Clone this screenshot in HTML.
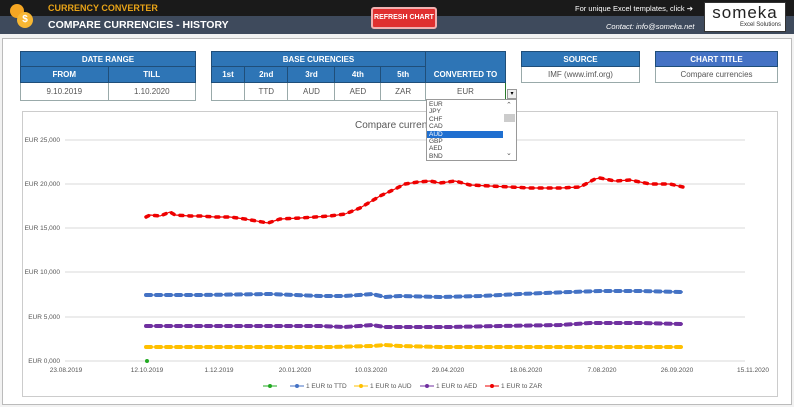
<!DOCTYPE html>
<html><head><meta charset="utf-8"><style>
*{margin:0;padding:0;box-sizing:border-box}
body{width:794px;height:407px;overflow:hidden;background:#f2f2f2;font-family:"Liberation Sans",sans-serif;position:relative}
.abs{position:absolute;white-space:nowrap}
.hdr{background:#1a1a1a;left:0;top:0;width:794px;height:16px}
.hdr2{background:#3e4a5c;left:0;top:16px;width:794px;height:18px}
.main{left:2px;top:38px;width:790px;height:367px;background:#fff;border:1px solid #bbb}
table{border-collapse:collapse;position:absolute;font-size:8px;text-align:center}
td{border:1px solid #9aa;height:16px}
.bh{background:#2e75b6;color:#fff;font-weight:bold;border-color:#1f4e79}
</style></head><body>
<div class="abs hdr"></div><div class="abs hdr2"></div>
<div class="abs" style="left:10px;top:4px;width:14px;height:14px;border-radius:50%;background:#f5a623"></div>
<div class="abs" style="left:17px;top:12px;width:16px;height:16px;border-radius:50%;background:#f7b733;color:#fff;font-size:10px;font-weight:bold;text-align:center;line-height:16px">$</div>
<div class="abs" style="left:48px;top:3px;color:#e8a317;font-size:9px;font-weight:bold">CURRENCY CONVERTER</div>
<div class="abs" style="left:48px;top:19px;color:#fff;font-size:10.5px;font-weight:bold">COMPARE CURRENCIES - HISTORY</div>
<div class="abs" style="left:371px;top:7px;width:66px;height:22px;background:#e03030;border:2px solid #f0b0b0;border-radius:3px;color:#fff;font-size:7px;font-weight:bold;text-align:center;line-height:18px">REFRESH CHART</div>
<div class="abs" style="left:575px;top:4px;color:#fff;font-size:7.5px">For unique Excel templates, click ➔</div>
<div class="abs" style="left:606px;top:22px;color:#fff;font-size:7.5px;font-style:italic">Contact: info@someka.net</div>
<div class="abs" style="left:704px;top:2px;width:82px;height:30px;background:#fff;border:1px solid #333;text-align:center">
<div style="font-size:17px;line-height:19px;letter-spacing:1px;color:#222">someka</div><div style="font-size:6px;color:#333;text-align:right;padding-right:4px">Excel Solutions</div></div>
<div class="abs main"></div>
<table style="left:20px;top:51px;width:176px"><tr><td colspan="2" class="bh" style="height:15px">DATE RANGE</td></tr><tr><td class="bh">FROM</td><td class="bh">TILL</td></tr><tr><td style="height:18px;color:#555">9.10.2019</td><td style="color:#555">1.10.2020</td></tr></table>
<table style="left:211px;top:51px;width:295px"><tr><td colspan="5" class="bh" style="height:15px">BASE CURENCIES</td><td rowspan="2" class="bh" style="width:80px;padding-top:14px">CONVERTED TO</td></tr><tr><td class="bh">1st</td><td class="bh">2nd</td><td class="bh">3rd</td><td class="bh">4th</td><td class="bh">5th</td></tr><tr><td style="height:18px"></td><td style="color:#555">TTD</td><td style="color:#555">AUD</td><td style="color:#555">AED</td><td style="color:#555">ZAR</td><td style="color:#555;border-color:#2a7a2a">EUR</td></tr></table>
<table style="left:521px;top:51px;width:119px"><tr><td class="bh" style="height:15px">SOURCE</td></tr><tr><td style="color:#555">IMF (www.imf.org)</td></tr></table>
<table style="left:655px;top:51px;width:123px"><tr><td class="bh" style="height:15px;background:#4472c4">CHART TITLE</td></tr><tr><td style="color:#555">Compare currencies</td></tr></table>
<div class="abs" style="left:22px;top:111px;width:756px;height:286px;border:1px solid #ccc;background:#fff"></div>
<svg class="abs" style="left:0;top:0" width="794" height="407">
<g stroke="#d9d9d9" stroke-width="1"><line x1="65" y1="140" x2="745" y2="140"/><line x1="65" y1="184" x2="745" y2="184"/><line x1="65" y1="228" x2="745" y2="228"/><line x1="65" y1="272" x2="745" y2="272"/><line x1="65" y1="317" x2="745" y2="317"/><line x1="65" y1="361" x2="745" y2="361"/></g>
<g font-family="Liberation Sans" font-size="6.5" fill="#555" text-anchor="end"><text x="60" y="142">EUR 25,000</text><text x="60" y="186">EUR 20,000</text><text x="60" y="230">EUR 15,000</text><text x="60" y="274">EUR 10,000</text><text x="60" y="319">EUR 5,000</text><text x="60" y="363">EUR 0,000</text></g>
<g font-family="Liberation Sans" font-size="6.5" fill="#555" text-anchor="middle"><text x="66" y="372">23.08.2019</text><text x="147" y="372">12.10.2019</text><text x="219" y="372">1.12.2019</text><text x="295" y="372">20.01.2020</text><text x="371" y="372">10.03.2020</text><text x="448" y="372">29.04.2020</text><text x="526" y="372">18.06.2020</text><text x="602" y="372">7.08.2020</text><text x="677" y="372">26.09.2020</text><text x="753" y="372">15.11.2020</text></g>
<text x="355" y="128" font-family="Liberation Sans" font-size="10" fill="#595959">Compare currencies</text>
<polyline fill="none" stroke="#e00" stroke-width="1.2" stroke-linejoin="round" points="146,217 150,215 160,216 170,212 175,215 190,216 200,216 215,217 230,217 245,219 268,223 280,219 300,218 315,217 330,216 345,214 360,208 370,202 380,196 395,189 405,184 418,182 430,181 440,183 455,181 470,185 490,186 510,187 530,188 560,188 580,187 595,179 600,178 615,181 630,180 650,184 670,184 683,187"/>
<polyline fill="none" stroke="#e00" stroke-width="3.5" stroke-dasharray="3 6" stroke-linecap="round" points="146,217 150,215 160,216 170,212 175,215 190,216 200,216 215,217 230,217 245,219 268,223 280,219 300,218 315,217 330,216 345,214 360,208 370,202 380,196 395,189 405,184 418,182 430,181 440,183 455,181 470,185 490,186 510,187 530,188 560,188 580,187 595,179 600,178 615,181 630,180 650,184 670,184 683,187"/>
<g fill="none" stroke-width="1.2"><polyline stroke="#4472c4" points="146,295 200,295 270,294 320,296 345,296 372,294 385,297 400,296 440,297 480,296 520,294 570,292 600,291 640,291 683,292"/>
<polyline stroke="#7030a0" points="146,326 250,326 320,326 345,327 372,325 385,327 450,327 500,326 560,325 590,323 640,323 683,324"/>
<polyline stroke="#ffc000" points="146,347 250,347 330,347 372,346 385,345 400,346 440,347 500,347 600,347 683,347"/></g>
<g fill="none" stroke-width="4" stroke-dasharray="5 5" stroke-linecap="round"><polyline stroke="#4472c4" points="146,295 200,295 270,294 320,296 345,296 372,294 385,297 400,296 440,297 480,296 520,294 570,292 600,291 640,291 683,292"/>
<polyline stroke="#7030a0" points="146,326 250,326 320,326 345,327 372,325 385,327 450,327 500,326 560,325 590,323 640,323 683,324"/>
<polyline stroke="#ffc000" points="146,347 250,347 330,347 372,346 385,345 400,346 440,347 500,347 600,347 683,347"/></g>
<circle cx="147" cy="361" r="2" fill="#2a2"/>
<g font-family="Liberation Sans" font-size="6.5" fill="#555">
<line x1="263" y1="386" x2="277" y2="386" stroke="#2a2"/><circle cx="270" cy="386" r="2" fill="#2a2"/>
<line x1="290" y1="386" x2="304" y2="386" stroke="#4472c4"/><circle cx="297" cy="386" r="2" fill="#4472c4"/><text x="306" y="388">1 EUR to TTD</text>
<line x1="354" y1="386" x2="368" y2="386" stroke="#ffc000"/><circle cx="361" cy="386" r="2" fill="#ffc000"/><text x="370" y="388">1 EUR to AUD</text>
<line x1="420" y1="386" x2="434" y2="386" stroke="#7030a0"/><circle cx="427" cy="386" r="2" fill="#7030a0"/><text x="436" y="388">1 EUR to AED</text>
<line x1="485" y1="386" x2="499" y2="386" stroke="#e00"/><circle cx="492" cy="386" r="2" fill="#e00"/><text x="501" y="388">1 EUR to ZAR</text></g>
</svg>
<div class="abs" style="left:507px;top:89px;width:10px;height:10px;border:1px solid #999;background:#eee;font-size:6px;text-align:center;line-height:9px">▾</div>
<div class="abs" style="left:426px;top:99px;width:91px;height:62px;border:1px solid #999;background:#fff;font-size:6.5px;color:#444;line-height:7.4px;padding-top:1px">
<div style="padding-left:2px">EUR</div><div style="padding-left:2px">JPY</div><div style="padding-left:2px">CHF</div><div style="padding-left:2px">CAD</div><div style="padding-left:2px;background:#1f6fd0;color:#fff;width:76px">AUD</div><div style="padding-left:2px">GBP</div><div style="padding-left:2px">AED</div><div style="padding-left:2px">BND</div>
<div class="abs" style="left:77px;top:14px;width:11px;height:8px;background:#ccc"></div>
<div class="abs" style="left:79px;top:2px;font-size:7px;color:#555">⌃</div><div class="abs" style="left:79px;top:50px;font-size:7px;color:#555">⌄</div></div>
</body></html>
